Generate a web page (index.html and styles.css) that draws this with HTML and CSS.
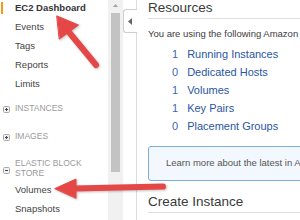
FILE: index.html
```html
<!DOCTYPE html>
<html>
<head>
<meta charset="utf-8">
<link rel="stylesheet" href="styles.css">
</head>
<body>
<div class="app">
  <nav class="sidebar">
    <div class="nav-item active">EC2 Dashboard</div>
    <div class="nav-item">Events</div>
    <div class="nav-item">Tags</div>
    <div class="nav-item">Reports</div>
    <div class="nav-item">Limits</div>

    <div class="group-head first">
      <svg class="toggle" width="7" height="7" viewBox="0 0 7 7"><rect x="0.5" y="0.5" width="6" height="6" rx="1" fill="#f2f2f2" stroke="#a8a8a8"/><rect x="2" y="3" width="3" height="1" fill="#444"/><rect x="3" y="2" width="1" height="3" fill="#444"/></svg>
      <span class="group-label">INSTANCES</span>
    </div>
    <div class="group-head">
      <svg class="toggle" width="7" height="7" viewBox="0 0 7 7"><rect x="0.5" y="0.5" width="6" height="6" rx="1" fill="#f2f2f2" stroke="#a8a8a8"/><rect x="2" y="3" width="3" height="1" fill="#444"/><rect x="3" y="2" width="1" height="3" fill="#444"/></svg>
      <span class="group-label">IMAGES</span>
    </div>
    <div class="group-head">
      <svg class="toggle" width="7" height="7" viewBox="0 0 7 7"><rect x="0.5" y="0.5" width="6" height="6" rx="1" fill="#f2f2f2" stroke="#a8a8a8"/><rect x="2" y="3" width="3" height="1" fill="#444"/></svg>
      <span class="group-label">ELASTIC BLOCK STORE</span>
    </div>
    <div class="nav-item sub">Volumes</div>
    <div class="nav-item">Snapshots</div>
  </nav>

  <div class="scrollbar">
    <svg class="sb-up" width="7" height="5" viewBox="0 0 7 5"><path d="M3.5 1 L6 4 L1 4 Z" fill="#a3a3a3"/></svg>
    <div class="sb-thumb"></div>
  </div>

  <main class="main">
    <div class="collapse-tab">
      <svg width="4" height="7" viewBox="0 0 4 7"><path d="M4 0 L0 3.5 L4 7 Z" fill="#666"/></svg>
    </div>
    <h2 class="heading">Resources</h2>
    <p class="intro">You are using the following Amazon EC2 resources in the US East region:</p>
    <div class="res-list">
      <span class="num">1</span><a class="link">Running Instances</a>
      <span class="num">0</span><a class="link">Dedicated Hosts</a>
      <span class="num">1</span><a class="link">Volumes</a>
      <span class="num">1</span><a class="link">Key Pairs</a>
      <span class="num">0</span><a class="link">Placement Groups</a>
    </div>
    <div class="info">Learn more about the latest in AWS Compute from AWS re:Invent by viewing the EC2 Videos.</div>
    <h2 class="heading create">Create Instance</h2>
  </main>
</div>

<svg class="annotations" width="300" height="220" viewBox="0 0 300 220">
  <g fill="#e54747" stroke="#e54747" stroke-linecap="round" stroke-linejoin="round">
    <line x1="68" y1="31" x2="96" y2="65" stroke-width="6"/>
    <polygon points="57,16 78.5,25 59.5,39" stroke-width="1"/>
    <line x1="74" y1="188.5" x2="163" y2="186.5" stroke-width="6"/>
    <polygon points="55,188.5 76,179 76,198" stroke-width="1"/>
  </g>
</svg>
</body>
</html>
```

FILE: styles.css
```css
html, body {
  margin: 0;
  padding: 0;
}
body {
  width: 300px;
  height: 220px;
  overflow: hidden;
  position: relative;
  background: #fff;
  font-family: "Liberation Sans", Arial, sans-serif;
  color: #444;
}
.app {
  display: flex;
  height: 220px;
}
.sidebar {
  width: 108px;
  flex: none;
}
.nav-item {
  font-size: 9.5px;
  line-height: 15px;
  padding-bottom: 4px;
  padding-left: 15px;
  color: #444;
  white-space: nowrap;
}
.nav-item.active {
  display: flex;
  align-items: flex-start;
  padding-left: 0;
  font-weight: bold;
  color: #333;
}
.nav-item.active::before {
  content: "";
  flex: none;
  width: 2px;
  height: 12px;
  margin-top: 2px;
  margin-left: 1px;
  margin-right: 12px;
  background: #f7981d;
}
.nav-item.sub {
  margin-top: 4px;
}
.group-head {
  display: flex;
  align-items: center;
  gap: 5px;
  padding-left: 3px;
  margin-top: 17px;
  font-size: 8.5px;
  line-height: 10px;
  color: #9a9a9a;
}
.group-head.first {
  margin-top: 7px;
}
.group-label {
  width: 86px;
}
.toggle {
  flex: none;
  display: block;
  margin-top: 4px;
}
.scrollbar {
  width: 15px;
  flex: none;
  background: #f1f1f1;
  display: flex;
  flex-direction: column;
  align-items: center;
}
.sb-up {
  display: block;
  margin-top: 3px;
}
.sb-thumb {
  width: 9px;
  height: 159px;
  margin-top: 5px;
  background: #c3c3c3;
}
.main {
  position: relative;
  flex: none;
  width: 400px;
  margin-left: 13px;
  padding-left: 11px;
  border-left: 1px solid #dcdcdc;
}
.collapse-tab {
  position: absolute;
  left: -14px;
  top: 9px;
  width: 13px;
  height: 22px;
  background: #fff;
  border: 1px solid #cfcfcf;
  border-right: none;
  border-radius: 3px 0 0 3px;
  display: flex;
  align-items: center;
  justify-content: center;
}
.collapse-tab svg {
  display: block;
  margin-left: -2px;
}
.heading {
  margin: 0;
  font-size: 13.5px;
  font-weight: normal;
  line-height: 16px;
  padding-bottom: 2px;
  border-bottom: 1px solid #dedede;
  color: #3a3a3a;
}
.heading.create {
  margin-top: 13px;
}
.intro {
  margin: 8.5px 0 0;
  font-size: 9.5px;
  line-height: 12px;
  color: #3d3d3d;
  white-space: nowrap;
}
.res-list {
  margin-top: 5px;
  padding-left: 24px;
  display: grid;
  grid-template-columns: auto 1fr;
  column-gap: 9px;
  font-size: 11px;
  line-height: 18px;
}
.num {
  color: #3a67b2;
}
.link {
  color: #2a55a3;
}
.info {
  margin-top: 11px;
  border: 1px solid #7aaedf;
  border-radius: 3px;
  background: #f2f8fe;
  padding: 10px 0 11px 17px;
  font-size: 9.5px;
  line-height: 12px;
  color: #555;
  white-space: nowrap;
}
.annotations {
  position: absolute;
  left: 0;
  top: 0;
  pointer-events: none;
  filter: drop-shadow(1px 1px 1px rgba(0,0,0,0.25));
}
```
